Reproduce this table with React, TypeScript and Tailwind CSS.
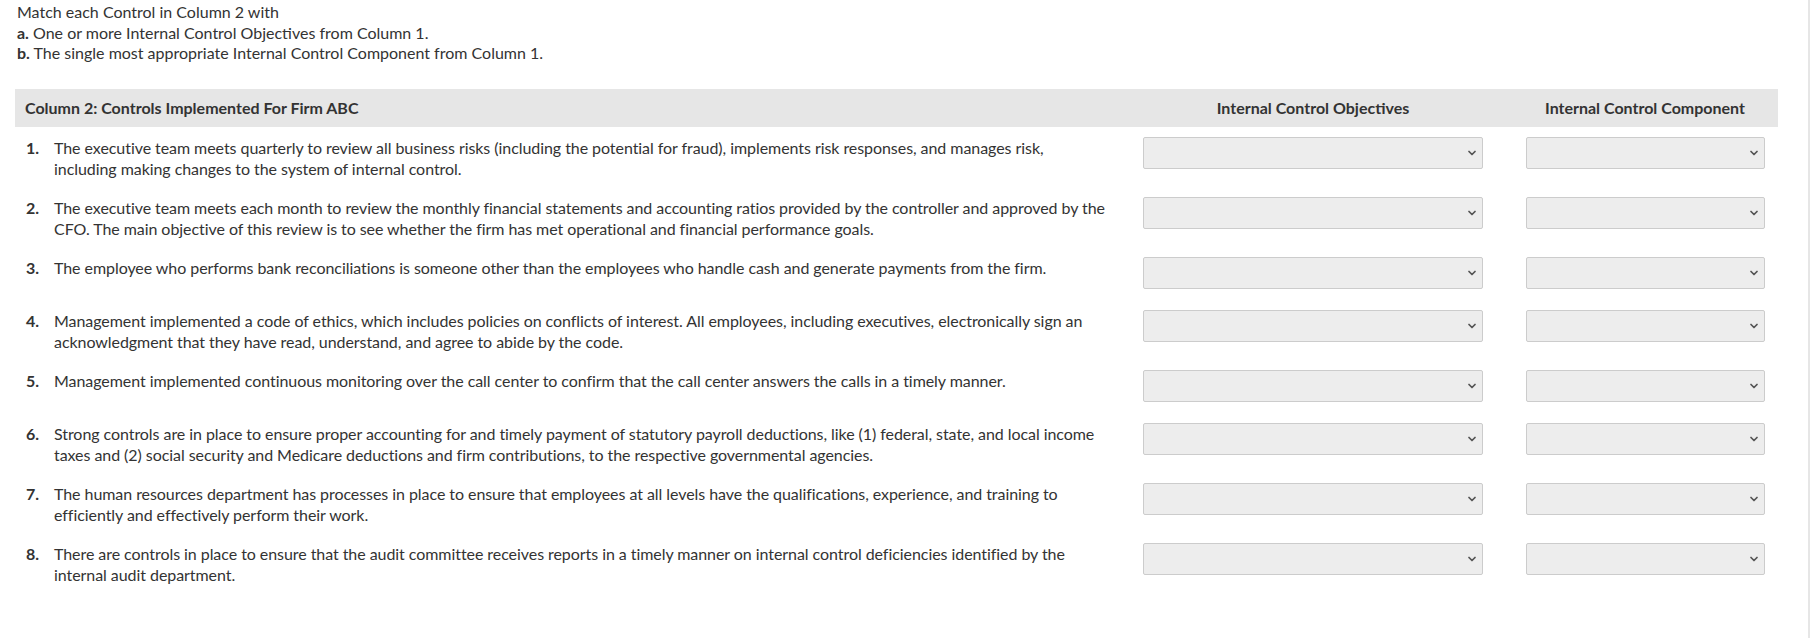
import { ChevronDown } from 'lucide-react';

interface ControlRow {
  id: number;
  text: string;
}

const controls: ControlRow[] = [
  {
    id: 1,
    text: 'The executive team meets quarterly to review all business risks (including the potential for fraud), implements risk responses, and manages risk, including making changes to the system of internal control.',
  },
  {
    id: 2,
    text: 'The executive team meets each month to review the monthly financial statements and accounting ratios provided by the controller and approved by the CFO. The main objective of this review is to see whether the firm has met operational and financial performance goals.',
  },
  {
    id: 3,
    text: 'The employee who performs bank reconciliations is someone other than the employees who handle cash and generate payments from the firm.',
  },
  {
    id: 4,
    text: 'Management implemented a code of ethics, which includes policies on conflicts of interest. All employees, including executives, electronically sign an acknowledgment that they have read, understand, and agree to abide by the code.',
  },
  {
    id: 5,
    text: 'Management implemented continuous monitoring over the call center to confirm that the call center answers the calls in a timely manner.',
  },
  {
    id: 6,
    text: 'Strong controls are in place to ensure proper accounting for and timely payment of statutory payroll deductions, like (1) federal, state, and local income taxes and (2) social security and Medicare deductions and firm contributions, to the respective governmental agencies.',
  },
  {
    id: 7,
    text: 'The human resources department has processes in place to ensure that employees at all levels have the qualifications, experience, and training to efficiently and effectively perform their work.',
  },
  {
    id: 8,
    text: 'There are controls in place to ensure that the audit committee receives reports in a timely manner on internal control deficiencies identified by the internal audit department.',
  },
];

function Dropdown({ width }: { width: string }) {
  return (
    <div className={`relative h-[32px] ${width}`}>
      <select className="w-full h-full appearance-none bg-[#ededed] border border-[#cccccc] rounded-[2px] outline-none" />
      <ChevronDown
        size={12}
        strokeWidth={3.5}
        className="absolute right-[5px] top-1/2 -translate-y-1/2 text-[#555555] pointer-events-none"
      />
    </div>
  );
}

export default function App() {
  return (
    <div className="flex w-full h-[638px] bg-white text-[#333333] font-['Lato','Liberation_Sans',sans-serif] text-[16px]">
      <div className="w-[1808px] pl-[15px] pr-[30px] pt-[2px]">
        {/* Instructions */}
        <div className="leading-[20.5px] pl-[2px]">
          <p>Match each Control in Column 2 with</p>
          <p>
            <span className="font-bold">a.</span> One or more Internal Control Objectives from Column 1.
          </p>
          <p>
            <span className="font-bold">b.</span> The single most appropriate Internal Control Component from Column 1.
          </p>
        </div>

        {/* Matching table */}
        <div className="mt-[25px]">
          <div className="flex items-center h-[38px] bg-[#e6e6e6] font-bold">
            <div className="w-[1099px] pl-[10px]">Column 2: Controls Implemented For Firm ABC</div>
            <div className="w-[398px] text-center">Internal Control Objectives</div>
            <div className="w-[266px] text-center">Internal Control Component</div>
          </div>

          <div className="pt-[10px]">
            {controls.map((row) => (
              <div key={row.id} className="flex items-start pb-[17px]">
                <div className="w-[1099px] flex leading-[21.5px] pl-[11px]">
                  <span className="w-[28px] shrink-0 font-bold">{row.id}.</span>
                  <span className="w-[1053px] shrink-0 tracking-[-0.06px]">{row.text}</span>
                </div>
                <div className="w-[398px] flex justify-center pb-[4px]">
                  <Dropdown width="w-[340px]" />
                </div>
                <div className="w-[266px] flex justify-center pb-[4px]">
                  <Dropdown width="w-[239px]" />
                </div>
              </div>
            ))}
          </div>
        </div>
      </div>
      <div className="w-[2px] h-full bg-[#e6e6e6]" />
    </div>
  );
}
